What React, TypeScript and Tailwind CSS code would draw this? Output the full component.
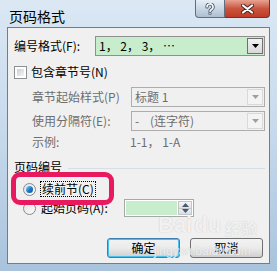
import type { ReactNode } from 'react';

const FONT = "font-['SimSun','Noto_Sans_CJK_SC',sans-serif]";

function Arrow({ disabled }: { disabled?: boolean }) {
  return (
    <div
      className={[
        'w-[16px] h-[16px] mr-[1px] flex items-center justify-center border',
        disabled ? 'border-[#d9d9d9] bg-[#f4f4f4]' : 'border-[#707070] bg-gradient-to-b from-[#f2f2f2] to-[#d8d8d8]',
      ].join(' ')}
    >
      <svg width="7" height="4" viewBox="0 0 7 4">
        <path d="M0 0h7L3.5 4z" fill={disabled ? '#a0a0a0' : '#000'} />
      </svg>
    </div>
  );
}

function Select({ value, width, disabled }: { value: string; width: string; disabled?: boolean }) {
  return (
    <div
      className={[
        width,
        'h-[20px] flex items-center border',
        disabled ? 'border-[#adadad] bg-[#f0f0f0] text-[#6d6d6d]' : 'border-[#8f8f8f] bg-[#c7edcc] text-black',
      ].join(' ')}
    >
      <span className="flex-1 pl-[3px] text-[12px] whitespace-pre">{value}</span>
      <Arrow disabled={disabled} />
    </div>
  );
}

function Radio({ checked }: { checked?: boolean }) {
  return (
    <div className="w-[13px] h-[13px] rounded-full border border-[#8a8a8a] bg-gradient-to-br from-[#e4e4e4] to-[#fafafa] flex items-center justify-center">
      {checked && <div className="w-[7px] h-[7px] rounded-full bg-gradient-to-br from-[#8fd0f5] via-[#1d7ed0] to-[#0a4f99]" />}
    </div>
  );
}

function Button({ children, focused }: { children: ReactNode; focused?: boolean }) {
  return (
    <div
      className={[
        'w-[73px] h-[20px] rounded-[3px] border flex items-center justify-center text-[12px] text-black',
        'bg-gradient-to-b from-[#f2f2f2] via-[#ebebeb] to-[#cfcfcf]',
        focused ? 'border-[#3c7fb1] shadow-[inset_0_0_0_1px_#48c0f0]' : 'border-[#707070]',
      ].join(' ')}
    >
      {children}
    </div>
  );
}

export default function App() {
  return (
    <div className={`relative w-[277px] h-[271px] overflow-hidden bg-gradient-to-b from-[#dbe8f4] via-[#c6d9ec] to-[#a9c3dd] ${FONT}`}>
      {/* title bar */}
      <div className="h-[27px] flex items-start">
        <span className="pl-[9px] pt-[6px] text-[14px] text-black">页码格式</span>
        <div className="ml-auto mr-[7px] flex">
          <div className="w-[30px] h-[18px] rounded-bl-[4px] border border-t-0 border-[#5d6f83] bg-gradient-to-b from-[#e6eef6] via-[#c9d7e6] to-[#aebfd2] flex items-center justify-center">
            <svg width="10" height="12" viewBox="0 0 10 12">
              <path d="M2 4a3 3 0 1 1 4.5 2.5c-1 .6-1.5 1-1.5 2" fill="none" stroke="#3d4a5a" strokeWidth="3.2" strokeLinecap="round" />
              <path d="M2 4a3 3 0 1 1 4.5 2.5c-1 .6-1.5 1-1.5 2" fill="none" stroke="#fff" strokeWidth="1.6" strokeLinecap="round" />
              <circle cx="5" cy="10.8" r="1.2" fill="#fff" stroke="#3d4a5a" strokeWidth="0.8" />
            </svg>
          </div>
          <div className="w-[45px] h-[18px] rounded-br-[4px] border border-l-0 border-t-0 border-[#5d3a35] bg-gradient-to-b from-[#e8a292] via-[#c8553f] to-[#c03a24] flex items-center justify-center">
            <svg width="13" height="10" viewBox="0 0 13 10">
              <path d="M2 1.5l9 7M11 1.5l-9 7" stroke="#4a2520" strokeWidth="4" strokeLinecap="round" />
              <path d="M2 1.5l9 7M11 1.5l-9 7" stroke="#fff" strokeWidth="2.2" strokeLinecap="round" />
            </svg>
          </div>
        </div>
      </div>

      {/* client area */}
      <div className="relative ml-[7px] w-[263px] h-[237px] border border-[#6f7d8c] bg-[#f0f0f0] text-[12px] text-black flex flex-col">
        <div className="mt-[8px] h-[20px] flex items-center">
          <span className="pl-[6px] w-[87px]">编号格式(F):</span>
          <Select value="1， 2， 3， …" width="w-[170px]" />
        </div>

        <div className="mt-[6px] h-[20px] flex items-center">
          <div className="ml-[6px] w-[13px] h-[13px] border border-[#8e8f8f] bg-white p-[2px]">
            <div className="w-full h-full bg-gradient-to-br from-[#cbcfd5] to-[#f4f4f4]" />
          </div>
          <span className="ml-[4px]">包含章节号(N)</span>
        </div>

        <div className="mt-[5px] h-[20px] flex items-center text-[#6d6d6d]">
          <span className="pl-[24px] w-[123px]">章节起始样式(P)</span>
          <Select value="标题 1" width="w-[134px]" disabled />
        </div>

        <div className="mt-[4px] h-[20px] flex items-center text-[#6d6d6d]">
          <span className="pl-[24px] w-[123px]">使用分隔符(E):</span>
          <Select value="-    (连字符)" width="w-[134px]" disabled />
        </div>

        <div className="mt-[4px] h-[14px] flex items-center text-[#6d6d6d]">
          <span className="pl-[24px] w-[122px]">示例:</span>
          <span>1-1， 1-A</span>
        </div>

        <div className="mt-[11px] h-[14px] flex items-center">
          <span className="pl-[6px]">页码编号</span>
          <div className="flex-1 ml-[6px] mr-[4px] mt-[3px] h-px bg-[#d5dfe5]" />
        </div>

        <div className="relative mt-[6px] h-[18px] flex items-center">
          <div className="ml-[15px]">
            <Radio checked />
          </div>
          <span className="ml-[4px] px-[1px] border border-dotted border-black leading-[14px]">续前节(C)</span>
          <div className="absolute left-[3px] top-[-8px] w-[103px] h-[33px] rounded-[9px] border-[5px] border-[#e8195f]" />
        </div>

        <div className="mt-[1px] h-[18px] flex items-center">
          <div className="ml-[15px]">
            <Radio />
          </div>
          <span className="ml-[5px] w-[83px]">起始页码(A):</span>
          <div className="w-[70px] h-[18px] border border-[#a8a8a8] bg-white p-[1px] flex">
            <div className="flex-1 bg-[#c7edcc]" />
            <div className="w-[14px] ml-[1px] flex flex-col">
              <div className="flex-1 border border-[#c5c5c5] bg-gradient-to-b from-[#f5f5f5] to-[#e2e2e2] flex items-center justify-center">
                <svg width="7" height="4" viewBox="0 0 7 4"><path d="M0 4h7L3.5 0z" fill="#4a5a6e" /></svg>
              </div>
              <div className="flex-1 border border-t-0 border-[#c5c5c5] bg-gradient-to-b from-[#e8eef6] to-[#d5e0ee] flex items-center justify-center">
                <svg width="7" height="4" viewBox="0 0 7 4"><path d="M0 0h7L3.5 4z" fill="#4a5a6e" /></svg>
              </div>
            </div>
          </div>
        </div>

        <div className="mt-[21px] flex justify-end gap-[10px] pr-[6px]">
          <Button focused>确定</Button>
          <Button>取消</Button>
        </div>

        {/* watermark */}
        <div className="absolute left-[150px] top-[186px] flex flex-col items-start pointer-events-none">
          <div className="flex items-end gap-[2px] text-white/80 [text-shadow:0_0_1px_#b5b5b5]">
            <span className="text-[22px] font-bold font-['Liberation_Sans',sans-serif] leading-none">Bai</span>
            <span className="text-[22px] font-bold font-['Liberation_Sans',sans-serif] leading-none">du</span>
            <span className="ml-[2px] text-[16px] font-bold leading-none">经验</span>
          </div>
          <span className="mt-[6px] ml-[-4px] text-[12px] text-white/70 [text-shadow:0_0_1px_#c0c0c0] font-['Liberation_Sans',sans-serif]">jingyan.baidu.com</span>
        </div>
      </div>
    </div>
  );
}
